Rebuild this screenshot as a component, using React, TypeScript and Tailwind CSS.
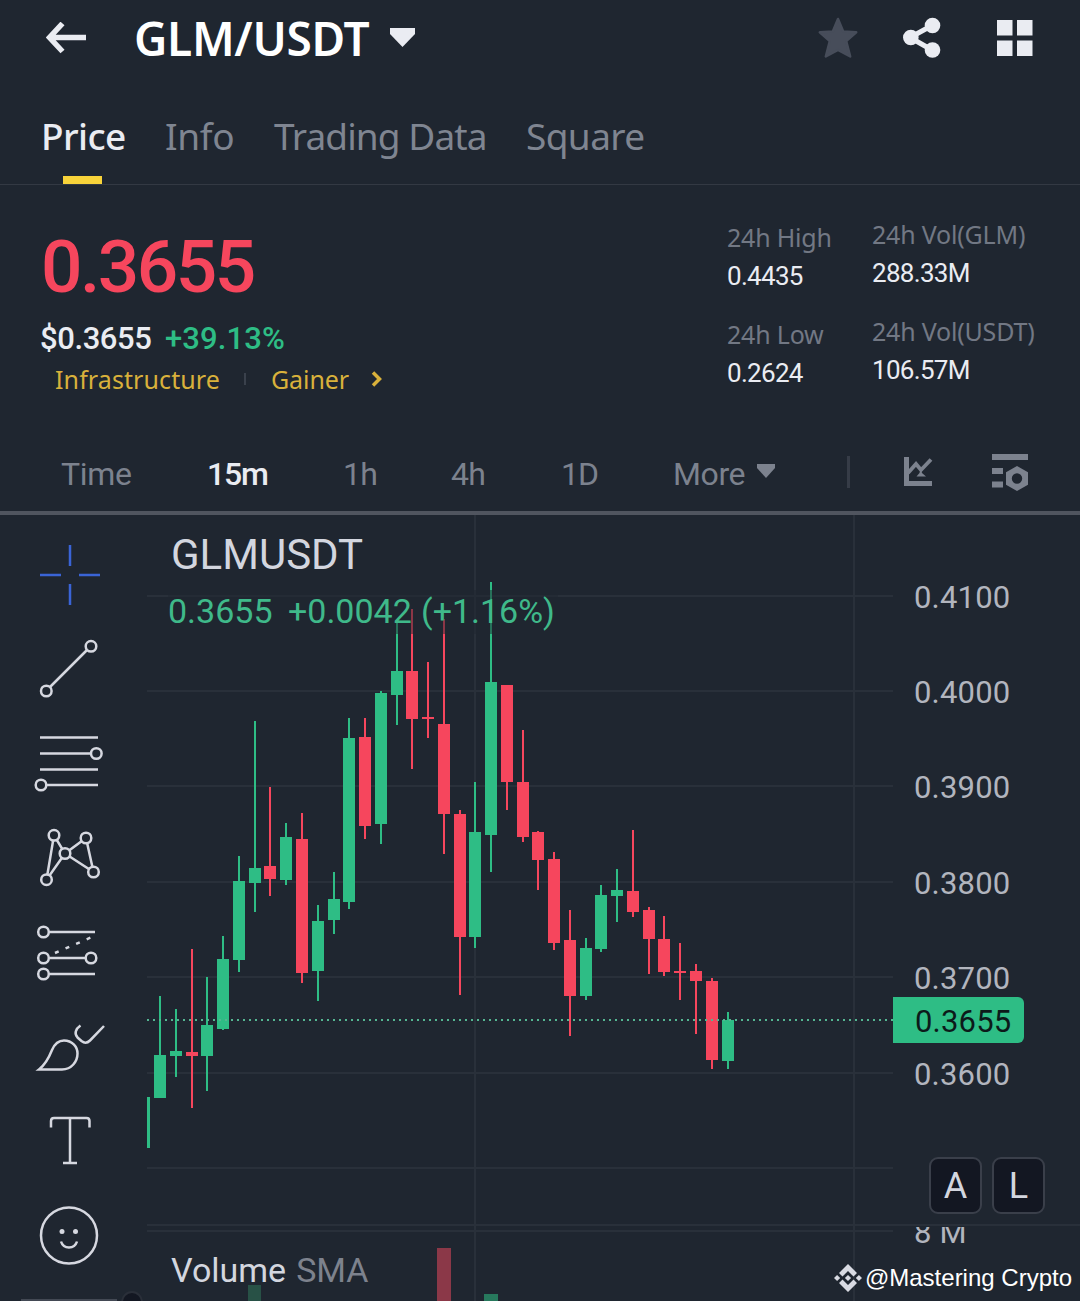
import React from 'react';
import clsx from 'clsx';

interface Candle {
    x: number;
    high: number;
    top: number;
    bottom: number;
    low: number;
    up: boolean;
}

const GREEN = '#2ebd85';
const RED = '#f6465d';
const GRID = '#29303a';

const candle = (x: number, high: number, top: number, bottom: number, low: number, up: boolean): Candle => ({
    x, high, top, bottom, low, up,
});

const candles: Candle[] = [
    candle(160, 996, 1055, 1098, 1098, true),
    candle(176, 1009, 1051, 1056, 1077, true),
    candle(192, 949, 1052, 1056, 1108, false),
    candle(207, 977, 1025, 1056, 1091, true),
    candle(223, 936, 959, 1029, 1030, true),
    candle(239, 856, 881, 960, 972, true),
    candle(255, 721, 868, 883, 912, true),
    candle(270, 787, 866, 879, 896, false),
    candle(286, 823, 837, 880, 885, true),
    candle(302, 813, 839, 973, 983, false),
    candle(318, 905, 921, 971, 1001, true),
    candle(334, 872, 899, 920, 934, true),
    candle(349, 718, 738, 902, 909, true),
    candle(365, 718, 737, 826, 839, false),
    candle(381, 691, 693, 824, 844, true),
    candle(397, 623, 671, 695, 725, true),
    candle(412, 609, 671, 719, 769, false),
    candle(428, 662, 717, 719, 738, false),
    candle(444, 619, 724, 814, 854, false),
    candle(460, 810, 814, 937, 995, false),
    candle(475, 782, 832, 937, 948, true),
    candle(491, 582, 682, 835, 872, true),
    candle(507, 685, 685, 782, 810, false),
    candle(523, 730, 782, 837, 842, false),
    candle(538, 831, 832, 860, 890, false),
    candle(554, 852, 859, 943, 950, false),
    candle(570, 910, 940, 996, 1036, false),
    candle(586, 938, 948, 996, 1000, true),
    candle(601, 885, 895, 949, 952, true),
    candle(617, 869, 890, 896, 922, true),
    candle(633, 830, 891, 912, 917, false),
    candle(649, 907, 910, 939, 974, false),
    candle(664, 916, 939, 972, 976, false),
    candle(680, 943, 971, 973, 1000, false),
    candle(696, 964, 971, 981, 1034, false),
    candle(712, 978, 981, 1060, 1069, false),
    candle(728, 1012, 1020, 1061, 1069, true),
];

const priceLevels = [
    { y: 596, label: '0.4100' },
    { y: 691, label: '0.4000' },
    { y: 786, label: '0.3900' },
    { y: 882, label: '0.3800' },
    { y: 977, label: '0.3700' },
    { y: 1073, label: '0.3600' },
    { y: 1168, label: '' },
];

const tabs = [
    { label: 'Price', cell: 'w-[124px]', text: 'tracking-[-0.6px]' },
    { label: 'Info', cell: 'w-[109px]', text: 'tracking-[-0.3px]' },
    { label: 'Trading Data', cell: 'w-[252px]', text: 'tracking-[-0.9px]' },
    { label: 'Square', cell: '', text: 'tracking-[-0.6px]' },
];

const intervals = [
    { label: 'Time', cell: 'w-[146px] tracking-[-0.3px]' },
    { label: '15m', cell: 'w-[136px] tracking-[-1.2px]' },
    { label: '1h', cell: 'w-[108px] tracking-[-0.8px]' },
    { label: '4h', cell: 'w-[110px] tracking-[-0.8px]' },
    { label: '1D', cell: 'w-[112px] tracking-[-1px]' },
];

const Header: React.FC = () => (
    <header className="flex h-[76px] items-center pl-[46px] pr-[47px] text-[#eaecf2]">
        <svg width="41" height="32" viewBox="0 0 41 32" fill="none" stroke="currentColor" strokeWidth="5.500">
            <path d="M40 15.500H5M16.500 1.500 3.500 15.500l13 14" />
        </svg>
        <h1 className="ml-[47px] w-[243px] whitespace-nowrap text-[46px] font-semibold leading-none tracking-[-0.3px] text-white">
            GLM/USDT
        </h1>
        <svg className="-mt-[2px] ml-[13px]" width="25" height="19" viewBox="0 0 25 19" fill="currentColor">
            <path d="M0 0h25v6L12.500 19 0 6z" />
        </svg>
        <div className="ml-auto flex items-center">
            <svg width="40" height="42" viewBox="0 0 40 42" fill="#474d5a" stroke="#474d5a" strokeWidth="2.500" strokeLinejoin="round">
                <path d="M20 2l5.200 12.500 13 .8-10 8.700 4 15.500L20 33 7.800 39.500l4-15.500-10-8.700 13-.8z" />
            </svg>
            <svg className="ml-[44px]" width="40" height="42" viewBox="0 0 40 42" fill="currentColor">
                <path d="M30 8.500 8 20.500l22 12.500" fill="none" stroke="currentColor" strokeWidth="5" />
                <circle cx="30.500" cy="8.500" r="7.800" />
                <circle cx="8.800" cy="20.500" r="7.800" />
                <circle cx="30.500" cy="33" r="7.800" />
            </svg>
            <svg className="-mt-[1px] ml-[54px]" width="37" height="36" viewBox="0 0 37 36" fill="currentColor">
                <path d="M1 0h15.500v15.500H1zM21 0h15.500v15.500H21zM1 20.500h15.500V36H1zM21 20.500h15.500V36H21z" />
            </svg>
        </div>
    </header>
);

const Tabs: React.FC = () => (
    <nav className="flex h-[109px] border-b border-[#333943] pl-[41px] text-[37px] leading-[50px] text-[#7f8591]">
        {tabs.map((tab, i) => (
            <div key={tab.label} className={clsx('flex flex-col justify-between whitespace-nowrap pt-[35px]', tab.cell)}>
                <span className={clsx(tab.text, i === 0 && 'font-medium text-[#eaecf2]')}>{tab.label}</span>
                {i === 0 && <div className="ml-[22px] h-[8px] w-[39px] bg-[#f8d33a]" />}
            </div>
        ))}
    </nav>
);

interface StatProps {
    label: string;
    value: string;
}

const Stat: React.FC<StatProps> = ({ label, value }) => (
    <div className="h-[97px] whitespace-nowrap">
        <div className="text-[25px] leading-[37px] tracking-[-0.2px] text-[#727884]">{label}</div>
        <div className="mt-px font-[Roboto] text-[26px] leading-[38px] tracking-[-0.7px] text-[#eaecf2]">{value}</div>
    </div>
);

const Summary: React.FC = () => (
    <section className="flex h-[248px]">
        <div className="w-[727px] whitespace-nowrap pl-[41px] pt-[43px]">
            <div className="font-[Roboto] text-[73px] font-medium leading-[78px] tracking-[-2.5px] text-[#f6465d]">0.3655</div>
            <div className="-ml-px mt-[12px] flex font-[Roboto] text-[31px] font-medium leading-[42px]">
                <span className="w-[125px] tracking-[-0.4px] text-[#eaecf2]">$0.3655</span>
                <span className="tracking-[0.1px] text-[#2ebd85]">+39.13%</span>
            </div>
            <div className="-mt-[2px] flex items-center pl-[14px] text-[25px] leading-[42px] text-[#d9b13b]">
                <span className="w-[189px] tracking-[0.1px]">Infrastructure</span>
                <span className="h-[12px] w-[2px] bg-[#3a414c]" />
                <span className="ml-[25px] w-[100px] tracking-[-0.1px]">Gainer</span>
                <svg width="12" height="16" viewBox="0 0 12 16" fill="none" stroke="currentColor" strokeWidth="3.500">
                    <path d="M2 1.500 8.500 8 2 14.500" />
                </svg>
            </div>
        </div>
        <div className="w-[145px] pt-[34px]">
            <Stat label="24h High" value="0.4435" />
            <Stat label="24h Low" value="0.2624" />
        </div>
        <div className="pt-[31px]">
            <Stat label="24h Vol(GLM)" value="288.33M" />
            <Stat label="24h Vol(USDT)" value="106.57M" />
        </div>
    </section>
);

const Intervals: React.FC = () => (
    <section className="flex h-[82px] items-center border-b-4 border-[#50555f] pl-[61px] font-[Roboto] text-[32px] text-[#7c828e]">
        {intervals.map(({ label, cell }) => (
            <span key={label} className={clsx('pt-[4px]', cell, label === '15m' && 'font-medium text-[#eaecf2]')}>{label}</span>
        ))}
        <span className="w-[84px] pt-[4px] tracking-[-0.4px]">More</span>
        <svg className="-mt-[3px]" width="18" height="14" viewBox="0 0 18 14" fill="currentColor">
            <path d="M0 0h18v4L9 14 0 4z" />
        </svg>
        <span className="ml-[72px] h-[32px] w-[3px] bg-[#363c47]" />
        <svg className="ml-[54px]" width="30" height="30" viewBox="0 0 30 30" fill="currentColor">
            <path d="M0 0h5v24h23v5H0z" />
            <path d="M4 16l8-9 5 6L27 2.500" fill="none" stroke="currentColor" strokeWidth="3.800" />
            <path d="M16.500 12l1.500 4 4 3.500H12.500l3-3.500z" />
        </svg>
        <svg className="ml-[58px]" width="36" height="38" viewBox="0 0 36 38" fill="currentColor">
            <path d="M0 1h36v6H0zM0 15h11v6H0zM0 28.500h11v6H0z" />
            <path d="M25 13l11 6.200v12.600L25 38l-11-6.200V19.200zm0 7.300a5.200 5.200 0 100 10.400 5.200 5.200 0 000-10.400z" fillRule="evenodd" />
        </svg>
    </section>
);

const Node: React.FC<{ x: number; y: number }> = ({ x, y }) => (
    <circle cx={x} cy={y} r="5.300" fill="#1f2630" />
);

// drawing tools, top to bottom
const tools: { name: string; shape: React.ReactNode }[] = [
    {
        name: 'cross',
        shape: <path d="M40 47h21M79 47h21M70 17v21M70 56v21" stroke="#3a64d6" />,
    },
    {
        name: 'trend',
        shape: <><path d="M46 69 91 24" /><Node x={46.300} y={69} /><Node x={91} y={24.300} /></>,
    },
    {
        name: 'fib',
        shape: (
            <>
                <path d="M40 21.500h58M40 37.500h56M40 53.500h58M41 69h57" />
                <Node x={96.300} y={37.500} />
                <Node x={41} y={69} />
            </>
        ),
    },
    {
        name: 'pattern',
        shape: (
            <>
                <path d="M46.500 69.700 54 25.300 65 43.500zM65 43.500 86 28l7.500 34z" />
                <Node x={54} y={25.300} />
                <Node x={86} y={28} />
                <Node x={65} y={43.500} />
                <Node x={46.500} y={69.700} />
                <Node x={93.500} y={62} />
            </>
        ),
    },
    {
        name: 'position',
        shape: (
            <>
                <path d="M43 28h52M43 54h48M43 70h52" />
                <path d="M55 49 92 33" strokeDasharray="4 7.500" />
                <Node x={43.500} y={28} />
                <Node x={43.500} y={54} />
                <Node x={91} y={54} />
                <Node x={43.500} y={70} />
            </>
        ),
    },
    {
        name: 'brush',
        shape: (
            <>
                <path d="M39 71.500C46 66 50 57 52 52c3-7 7-9.500 12-9.500 8 0 13.500 6 13.500 13 0 8-6 16-15.500 16z" />
                <path d="M80.500 27.500c-5 3.500-6.500 8-3 12l4 3.500c3 2.500 6 2 8.500-.5L104 28" />
            </>
        ),
    },
    {
        name: 'text',
        shape: <path d="M51 35.500V29q0-3 3-3h32.500q3 0 3 3v6.500M70 26v45M63 71h14" />,
    },
    {
        name: 'emoji',
        shape: (
            <>
                <circle cx="69" cy="49.500" r="28" />
                <path d="M61 55.500c2.500 8 13.500 8 16 0" />
                <circle cx="62" cy="45.500" r="2.500" fill="#d6d8e0" stroke="none" />
                <circle cx="75.500" cy="45.500" r="2.500" fill="#d6d8e0" stroke="none" />
            </>
        ),
    },
];

const Toolbar: React.FC = () => (
    <aside className="flex w-[147px] flex-col pt-[13px]">
        {tools.map(({ name, shape }) => (
            <svg key={name} className="shrink-0" width="147" height="94" viewBox="0 0 147 94" fill="none" stroke="#d6d8e0" strokeWidth="2.500">
                {shape}
            </svg>
        ))}
        <svg className="shrink-0" width="147" height="21" viewBox="0 0 147 21">
            <path d="M21 19h96v2H21z" fill="#434954" />
            <circle cx="132" cy="22" r="10" fill="#131722" stroke="#2a2f39" strokeWidth="2" />
        </svg>
    </aside>
);

const Chart: React.FC = () => (
    <svg className="block" width="933" height="786" viewBox="147 515 933 786" shapeRendering="crispEdges">
        <g fill={GRID}>
            {priceLevels.map(({ y }) => (
                <rect key={y} x="147" y={y - 1} width="746" height="2" />
            ))}
            <rect x="147" y="1224" width="933" height="2" />
            <rect x="147" y="1230" width="746" height="2" />
            <rect x="474" y="515" width="2" height="786" />
            <rect x="853" y="515" width="2" height="786" />
        </g>
        <rect x="147" y="1097" width="3" height="51" fill={GREEN} />
        {candles.map(({ x, high, top, bottom, low, up }) => (
            <g key={x} fill={up ? GREEN : RED}>
                <rect x={x - 1} y={high} width="2" height={low - high} />
                <rect x={x - 6} y={top} width="12" height={bottom - top} />
            </g>
        ))}
        <path d="M147 1020H893" stroke="#54b692" strokeWidth="2" strokeDasharray="2 4" />
        <rect x="168" y="590" width="390" height="44" fill="#1f2630" fillOpacity="0.5" />

        <rect x="248" y="1285" width="13" height="16" fill="#285146" />
        <rect x="437" y="1248" width="14" height="53" fill="#8b3848" />
        <rect x="484" y="1294" width="14" height="7" fill="#27795d" />

        <g className="font-[Roboto] text-[31px] tracking-[0.2px]" fill="#b2b5be">
            {priceLevels.map(({ y, label }) => (
                <text key={y} x="914" y={y + 11.500}>{label}</text>
            ))}
            <svg x="893" y="1227" width="187" height="40">
                <text x="21" y="16">8 M</text>
            </svg>
        </g>
        <path d="M893 997h125a6 6 0 016 6v34a6 6 0 01-6 6H893z" fill={GREEN} shapeRendering="auto" />
        <text className="font-[Roboto] text-[31px] tracking-[0.2px]" x="915" y="1032" fill="#0c1a1a">0.3655</text>
    </svg>
);

const Watermark: React.FC = () => (
    <div className="absolute bottom-[8px] right-[8px] flex items-center font-['Liberation_Sans'] text-[24px] leading-[30px] text-white">
        <svg className="mr-[3px]" width="28" height="28" viewBox="0 0 28 28" fill="#d8dae2">
            <path d="M14 0l9 9-3.500 3.500L14 7l-5.500 5.500L5 9zM14 28l9-9-3.500-3.500L14 21l-5.500-5.500L5 19zM14 10.900l3.100 3.100-3.100 3.100-3.100-3.100zM3.100 10.900 6.200 14l-3.100 3.100L0 14zM24.900 10.900 28 14l-3.100 3.100-3.100-3.100z" />
        </svg>
        @Mastering Crypto
    </div>
);

const App: React.FC = () => (
    <div className="h-[1301px] w-[1080px] overflow-hidden bg-[#1f2630] font-['Noto_Sans',sans-serif]">
        <Header />
        <Tabs />
        <Summary />
        <Intervals />
        <main className="relative flex h-[786px] overflow-hidden">
            <Toolbar />
            <Chart />
            <div className="absolute left-[168px] top-[15px] whitespace-nowrap font-[Roboto]">
                <div className="pl-[3px] text-[42px] leading-[50px] text-[#d3d6df]">GLMUSDT</div>
                <div className="mt-[7px] flex text-[34px] leading-[48px] text-[#3fb98a]">
                    <span className="w-[120px]">0.3655</span>
                    <span className="w-[133px]">+0.0042</span>
                    <span>(+1.16%)</span>
                </div>
            </div>
            <div className="absolute left-[171px] top-[732px] flex gap-[10px] whitespace-nowrap font-[Roboto] text-[34px] leading-[46px] text-[#d3d6df]">
                <span>Volume</span>
                <span className="text-[#7d828d]">SMA</span>
            </div>
            <div className="absolute right-[35px] top-[642px] flex gap-[10px] font-[Roboto] text-[36px] text-[#d3d6df]">
                {['A', 'L'].map((mode) => (
                    <button key={mode} className="flex h-[57px] w-[53px] items-center justify-center rounded-[9px] border-2 border-[#3a3f4a] bg-[#131722]">
                        {mode}
                    </button>
                ))}
            </div>
            <Watermark />
        </main>
    </div>
);

export default App;
